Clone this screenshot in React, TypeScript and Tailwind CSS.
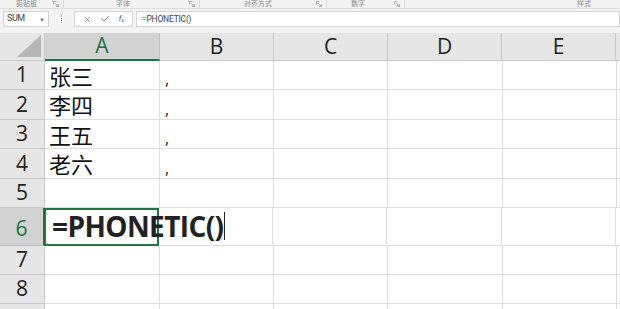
import { X, Check } from "lucide-react";

const cols = ["A", "B", "C", "D", "E"];

interface Row {
  num: number;
  h: string;
  a?: string;
  b?: string;
}

const rows: Row[] = [
  { num: 1, h: "h-[29px]", a: "张三", b: "," },
  { num: 2, h: "h-[30px]", a: "李四", b: "," },
  { num: 3, h: "h-[29px]", a: "王五", b: "," },
  { num: 4, h: "h-[30px]", a: "老六", b: "," },
  { num: 5, h: "h-[29px]" },
];

// ribbon group footers, widths measured off the screenshot
const ribbonGroups = [
  { label: "剪贴板", w: "w-[64px]", pad: "pl-[16px]", launcher: true },
  { label: "字体", w: "w-[136px]", pad: "pl-[52px]", launcher: true },
  { label: "对齐方式", w: "w-[127px]", pad: "pl-[44px]", launcher: true },
  { label: "数字", w: "w-[78px]", pad: "pl-[24px]", launcher: true },
  { label: "样式", w: "flex-1", pad: "pl-[172px]", launcher: false },
];

function Launcher() {
  return (
    <svg width="6" height="6" viewBox="0 0 6 6" className="text-[#9a9a9a]">
      <path d="M0.5 0.5h3M0.5 0.5v3M2 2l3.5 3.5M5.5 3v2.5H3" stroke="currentColor" strokeWidth="0.8" fill="none" />
    </svg>
  );
}

function Ribbon() {
  return (
    <div className="flex h-[9px] bg-[#f3f3f3] border-b border-[#dcdcdc] overflow-hidden text-[7px] leading-[8px] text-[#8a8a8a]">
      {ribbonGroups.map((g) => (
        <div key={g.label} className={`${g.w} ${g.pad} flex items-start relative border-r border-[#dcdcdc] last:border-r-0`}>
          <span>{g.label}</span>
          {g.launcher && (
            <span className="absolute right-[4px] top-[1px]">
              <Launcher />
            </span>
          )}
        </div>
      ))}
    </div>
  );
}

function FormulaBar() {
  return (
    <div className="flex items-center h-[20px] bg-[#f3f3f3] pl-[3px] text-[9px] text-[#444]" style={{ fontFamily: "Roboto, 'Noto Sans', sans-serif" }}>
      <div className="w-[46px] h-[16px] bg-white border border-[#d4d4d4] flex items-center justify-between px-[3px]">
        <span className="tracking-tighter">SUM</span>
        <span className="text-[6px] text-[#777]">▼</span>
      </div>
      <div className="w-[25px] flex justify-center">
        <span className="w-[1px] h-[8px] border-l border-dotted border-[#aaa]" />
      </div>
      <div className="w-[59px] h-[16px] bg-white border border-[#d4d4d4] flex items-center justify-around px-[4px] text-[#555]">
        <X size={9} strokeWidth={1.6} />
        <Check size={10} strokeWidth={2} />
        <span className="italic text-[8px]">
          f<sub className="text-[5px]">x</sub>
        </span>
      </div>
      <div className="flex-1 h-[16px] ml-[3px] bg-white border border-[#d4d4d4] flex items-center px-[5px] text-[8.5px] tracking-tight">
        =PHONETIC()
      </div>
    </div>
  );
}

function Corner() {
  return (
    <div className="w-[45px] h-full border-r border-b border-[#c9c9c9] bg-[#e6e6e6] flex items-end justify-end p-[3px]">
      <svg width="24" height="22" viewBox="0 0 24 22">
        <polygon points="24,0 24,22 0,22" fill="#b7b7b7" />
      </svg>
    </div>
  );
}

function HeaderRow() {
  return (
    <div className="flex h-[28px]">
      <Corner />
      {cols.map((c) => (
        <div
          key={c}
          className={
            c === "A"
              ? "w-[115px] bg-[#d2d2d2] border-r border-[#c0c0c0] border-b-2 border-b-[#217346] flex items-center justify-center text-[#217346] text-[21px]"
              : "w-[114px] bg-[#e6e6e6] border-r border-b border-[#c9c9c9] flex items-center justify-center text-[#222] text-[21px]"
          }
        >
          {c}
        </div>
      ))}
      <div className="flex-1 bg-[#e6e6e6] border-b border-[#c9c9c9]" />
    </div>
  );
}

function RowNum({ n, active }: { n?: number; active?: boolean }) {
  return (
    <div
      className={
        active
          ? "w-[45px] h-full bg-[#d2d2d2] border-r-2 border-r-[#217346] border-b border-b-[#c0c0c0] flex items-end justify-center pb-[1px] text-[#217346] text-[21px]"
          : "w-[45px] h-full bg-[#e6e6e6] border-r border-b border-[#c9c9c9] flex items-center justify-center text-[#222] text-[21px]"
      }
    >
      {n}
    </div>
  );
}

function Cell({ children, w }: { children?: React.ReactNode; w: string }) {
  return <div className={`${w} h-full border-r border-b border-[#dedede] flex items-center overflow-visible`}>{children}</div>;
}

function DataRow({ r }: { r: Row }) {
  return (
    <div className={`flex ${r.h}`}>
      <RowNum n={r.num} />
      <Cell w="w-[115px]">
        <span className="pl-[4px] text-[22px] text-[#111]" style={{ fontFamily: "'Noto Sans CJK SC', sans-serif" }}>
          {r.a}
        </span>
      </Cell>
      <Cell w="w-[114px]">
        <span className="pl-[5px] pt-[8px] text-[16px] text-[#222]">{r.b}</span>
      </Cell>
      <Cell w="w-[114px]" />
      <Cell w="w-[115px]" />
      <Cell w="w-[114px]" />
      <div className="flex-1 border-b border-[#dedede]" />
    </div>
  );
}

function ActiveRow() {
  return (
    <div className="flex h-[38px]">
      <RowNum n={6} active />
      <div className="w-[115px] h-full border-2 border-[#217346] -ml-[1px] flex items-end overflow-visible">
        <span className="relative z-10 pl-[6px] pb-[1px] text-[28px] leading-[34px] font-bold text-[#222] whitespace-nowrap tracking-[-0.6px] flex items-center">
          =PHONETIC()
          <span className="inline-block w-[1px] h-[28px] bg-[#222] ml-[1px]" />
        </span>
      </div>
      <Cell w="w-[114px]" />
      <Cell w="w-[114px]" />
      <Cell w="w-[115px]" />
      <Cell w="w-[114px]" />
      <div className="flex-1 border-b border-[#dedede]" />
    </div>
  );
}

function PlainRow({ n }: { n?: number }) {
  return (
    <div className="flex h-[29px]">
      <RowNum n={n} />
      <Cell w="w-[115px]" />
      <Cell w="w-[114px]" />
      <Cell w="w-[114px]" />
      <Cell w="w-[115px]" />
      <Cell w="w-[114px]" />
      <div className="flex-1 border-b border-[#dedede]" />
    </div>
  );
}

export default function App() {
  return (
    <div className="w-[620px] h-[309px] overflow-hidden bg-white" style={{ fontFamily: "'Open Sans', 'Noto Sans CJK SC', sans-serif" }}>
      <Ribbon />
      <FormulaBar />
      <div className="h-[4px] bg-[#f3f3f3]" />
      <HeaderRow />
      {rows.map((r) => (
        <DataRow key={r.num} r={r} />
      ))}
      <ActiveRow />
      <PlainRow n={7} />
      <PlainRow n={8} />
      <PlainRow />
    </div>
  );
}
